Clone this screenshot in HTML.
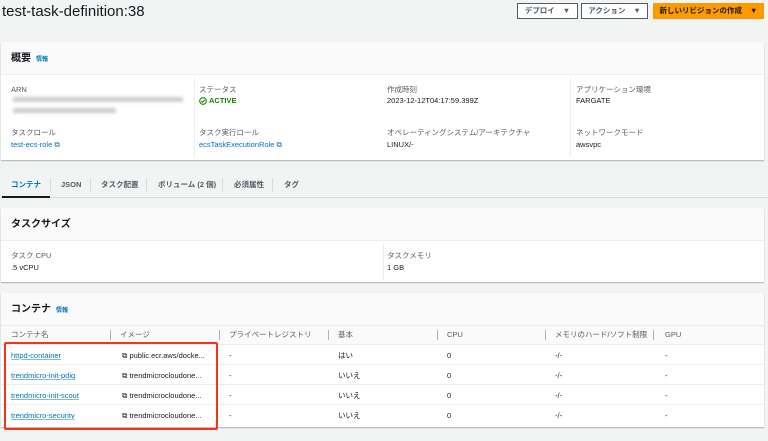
<!DOCTYPE html>
<html><head><meta charset="utf-8"><style>
*{box-sizing:border-box;margin:0;padding:0}
body{width:768px;height:441px;background:#f2f3f3;font-family:"Liberation Sans","Noto Sans CJK JP",sans-serif;color:#16191f;position:relative;overflow:hidden;font-size:7.5px;line-height:1}
.a{position:absolute;line-height:1}
.title{left:2px;top:4px;font-size:15px;color:#16191f}
.btn{top:3px;height:16px;border:1px solid #545b64;background:#fff;font-size:7.5px;font-weight:bold;color:#545b64;display:flex;align-items:center;justify-content:center;gap:8px}
.btn.o{background:#ff9900;border-color:#ff9900;color:#16191f}
.panel{background:#fff;box-shadow:0 1px 1px rgba(0,22,40,.3)}
.hd{background:#fafafa;border-bottom:1px solid #eaeded}
h2{font-size:10px;font-weight:bold;position:absolute}
.info{color:#0073bb;font-size:6px;font-weight:bold;margin-left:5px}
.lb{color:#545b64;font-size:7.5px}
.v{font-size:7.5px}
.lk{color:#0073bb;font-size:7.5px}
.vd{width:1px;background:#eaeded}
.tab{top:172px;height:26px;font-size:7.5px;font-weight:bold;color:#545b64;display:flex;align-items:center}
.th{color:#545b64;font-size:7.5px}
.row{left:1px;width:762px;height:20px;border-top:1px solid #eaeded}
.cl{color:#0073bb;text-decoration:underline;text-decoration-color:rgba(0,115,187,.5)}
</style></head><body>
<div class="a title">test-task-definition:38</div>
<div class="a btn" style="left:517px;width:61px">デプロイ <span>▼</span></div>
<div class="a btn" style="left:581px;width:67px">アクション <span>▼</span></div>
<div class="a btn o" style="left:653px;width:111px">新しいリビジョンの作成 <span>▼</span></div>

<div class="a panel" style="left:1px;top:42px;width:763px;height:118px">
 <div class="hd" style="height:33px;position:relative"><h2 style="left:10px;top:12px">概要<span class="info">情報</span></h2></div>
</div>
<div class="a vd" style="left:194px;top:78px;height:78px"></div>
<div class="a vd" style="left:570px;top:78px;height:78px"></div>
<div class="a lb" style="left:11px;top:86px">ARN</div>
<div class="a" style="left:13px;top:97px;width:170px;height:5px;background:#ccc;filter:blur(1.5px)"></div>
<div class="a" style="left:13px;top:108px;width:103px;height:5px;background:#ccc;filter:blur(1.5px)"></div>
<div class="a lb" style="left:199px;top:86px">ステータス</div>
<div class="a" style="left:199px;top:97px;color:#1d8102;font-weight:bold;font-size:7.5px;display:flex;align-items:center;gap:2px"><svg width="8" height="8" viewBox="0 0 8 8"><circle cx="4" cy="4" r="3.3" fill="none" stroke="#1d8102" stroke-width="1.1"/><path d="M2.3 4.1l1.2 1.1 2.2-2.3" fill="none" stroke="#1d8102" stroke-width="1.1"/></svg>ACTIVE</div>
<div class="a lb" style="left:387px;top:86px">作成時刻</div>
<div class="a v" style="left:387px;top:97px">2023-12-12T04:17:59.399Z</div>
<div class="a lb" style="left:576px;top:86px">アプリケーション環境</div>
<div class="a v" style="left:576px;top:97px">FARGATE</div>
<div class="a lb" style="left:11px;top:129px">タスクロール</div>
<div class="a lk" style="left:11px;top:141px">test-ecs-role ⧉</div>
<div class="a lb" style="left:199px;top:129px">タスク実行ロール</div>
<div class="a lk" style="left:199px;top:141px">ecsTaskExecutionRole ⧉</div>
<div class="a lb" style="left:387px;top:129px">オペレーティングシステム/アーキテクチャ</div>
<div class="a v" style="left:387px;top:141px">LINUX/-</div>
<div class="a lb" style="left:576px;top:129px">ネットワークモード</div>
<div class="a v" style="left:576px;top:141px">awsvpc</div>

<div class="a" style="left:0;top:197px;width:768px;height:1px;background:#d5dbdb"></div>
<div class="a" style="left:2px;top:196px;width:48px;height:2px;background:#16191f"></div>
<div class="a tab" style="left:11px;color:#0073bb">コンテナ</div>
<div class="a tab" style="left:61px">JSON</div>
<div class="a tab" style="left:101px">タスク配置</div>
<div class="a tab" style="left:158px">ボリューム (2 個)</div>
<div class="a tab" style="left:234px">必須属性</div>
<div class="a tab" style="left:284px">タグ</div>
<div class="a vd" style="left:50px;top:178px;height:14px;background:#d5dbdb"></div>
<div class="a vd" style="left:90px;top:178px;height:14px;background:#d5dbdb"></div>
<div class="a vd" style="left:146px;top:178px;height:14px;background:#d5dbdb"></div>
<div class="a vd" style="left:222px;top:178px;height:14px;background:#d5dbdb"></div>
<div class="a vd" style="left:272px;top:178px;height:14px;background:#d5dbdb"></div>

<div class="a panel" style="left:1px;top:208px;width:763px;height:74px">
 <div class="hd" style="height:33px;position:relative"><h2 style="left:10px;top:12px">タスクサイズ</h2></div>
</div>
<div class="a vd" style="left:383px;top:244px;height:35px"></div>
<div class="a lb" style="left:11px;top:252px">タスク CPU</div>
<div class="a v" style="left:11px;top:264px">.5 vCPU</div>
<div class="a lb" style="left:387px;top:252px">タスクメモリ</div>
<div class="a v" style="left:387px;top:264px">1 GB</div>

<div class="a panel" style="left:1px;top:293px;width:763px;height:134px">
 <div class="hd" style="height:33px;position:relative"><h2 style="left:10px;top:12px">コンテナ<span class="info">情報</span></h2></div>
 <div style="height:19px;background:#fafafa;border-bottom:1px solid #eaeded"></div>
</div>
<div class="a th" style="left:11px;top:331px">コンテナ名</div>
<div class="a th" style="left:120px;top:331px">イメージ</div>
<div class="a th" style="left:229px;top:331px">プライベートレジストリ</div>
<div class="a th" style="left:338px;top:331px">基本</div>
<div class="a th" style="left:447px;top:331px">CPU</div>
<div class="a th" style="left:555px;top:331px">メモリのハード/ソフト制限</div>
<div class="a th" style="left:665px;top:331px">GPU</div>
<div class="a vd" style="left:110px;top:330px;height:10px;background:#aab7b8"></div>
<div class="a vd" style="left:219px;top:330px;height:10px;background:#aab7b8"></div>
<div class="a vd" style="left:328px;top:330px;height:10px;background:#aab7b8"></div>
<div class="a vd" style="left:437px;top:330px;height:10px;background:#aab7b8"></div>
<div class="a vd" style="left:545px;top:330px;height:10px;background:#aab7b8"></div>
<div class="a vd" style="left:653px;top:330px;height:10px;background:#aab7b8"></div>

<div class="a row" style="top:364px"></div>
<div class="a row" style="top:384px"></div>
<div class="a row" style="top:404px"></div>

<div class="a lk cl" style="left:11px;top:352px">httpd-container</div>
<div class="a lk cl" style="left:11px;top:372px">trendmicro-init-pdig</div>
<div class="a lk cl" style="left:11px;top:392px">trendmicro-init-scout</div>
<div class="a lk cl" style="left:11px;top:412px">trendmicro-security</div>
<div class="a v" style="left:122px;top:352px">⧉ public.ecr.aws/docke...</div>
<div class="a v" style="left:122px;top:372px">⧉ trendmicrocloudone...</div>
<div class="a v" style="left:122px;top:392px">⧉ trendmicrocloudone...</div>
<div class="a v" style="left:122px;top:412px">⧉ trendmicrocloudone...</div>
<div class="a v" style="left:229px;top:352px">-</div><div class="a v" style="left:229px;top:372px">-</div><div class="a v" style="left:229px;top:392px">-</div><div class="a v" style="left:229px;top:412px">-</div>
<div class="a v" style="left:338px;top:352px">はい</div><div class="a v" style="left:338px;top:372px">いいえ</div><div class="a v" style="left:338px;top:392px">いいえ</div><div class="a v" style="left:338px;top:412px">いいえ</div>
<div class="a v" style="left:447px;top:352px">0</div><div class="a v" style="left:447px;top:372px">0</div><div class="a v" style="left:447px;top:392px">0</div><div class="a v" style="left:447px;top:412px">0</div>
<div class="a v" style="left:555px;top:352px">-/-</div><div class="a v" style="left:555px;top:372px">-/-</div><div class="a v" style="left:555px;top:392px">-/-</div><div class="a v" style="left:555px;top:412px">-/-</div>
<div class="a v" style="left:665px;top:352px">-</div><div class="a v" style="left:665px;top:372px">-</div><div class="a v" style="left:665px;top:392px">-</div><div class="a v" style="left:665px;top:412px">-</div>

<div class="a" style="left:4px;top:342px;width:214px;height:88px;border:2.5px solid #f5341c;border-radius:2px"></div>
</body></html>
